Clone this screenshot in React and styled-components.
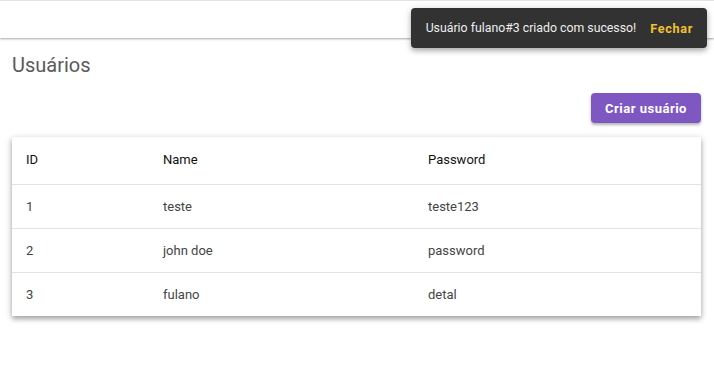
import React from "react";
import styled, { createGlobalStyle } from "styled-components";

const GlobalStyle = createGlobalStyle`
  body {
    margin: 0;
    background: #fff;
    font-family: Roboto, "Liberation Sans", sans-serif;
  }
`;

const users = [
  { id: 1, name: "teste", password: "teste123" },
  { id: 2, name: "john doe", password: "password" },
  { id: 3, name: "fulano", password: "detal" },
];

function App() {
  return (
    <>
      <GlobalStyle />
      <AppBar />
      <Snackbar>
        <span>Usuário fulano#3 criado com sucesso!</span>
        <SnackAction>Fechar</SnackAction>
      </Snackbar>
      <Main>
        <Title>Usuários</Title>
        <Actions>
          <PrimaryButton>Criar usuário</PrimaryButton>
        </Actions>
        <Card>
          <Table>
            <colgroup>
              <col style={{ width: 137 }} />
              <col style={{ width: 265 }} />
              <col />
            </colgroup>
            <thead>
              <tr>
                <Th>ID</Th>
                <Th>Name</Th>
                <Th>Password</Th>
              </tr>
            </thead>
            <tbody>
              {users.map((u, i) => (
                <tr key={u.id}>
                  <Td last={i === users.length - 1}>{u.id}</Td>
                  <Td last={i === users.length - 1}>{u.name}</Td>
                  <Td last={i === users.length - 1}>{u.password}</Td>
                </tr>
              ))}
            </tbody>
          </Table>
        </Card>
      </Main>
    </>
  );
}

export default App;

const AppBar = styled.header`
  height: 37px;
  background: #fff;
  border-top: 1px solid #e2e2e2;
  box-shadow: 0 1px 2px rgba(0, 0, 0, 0.35);
`;

const Snackbar = styled.div`
  position: absolute;
  top: 8px;
  right: 7px;
  height: 40px;
  box-sizing: border-box;
  padding: 0 14px 0 15px;
  display: flex;
  align-items: center;
  gap: 14px;
  background: #323232;
  color: #eee;
  border-radius: 4px;
  font-size: 12.3px;
  box-shadow: 0 3px 5px rgba(0, 0, 0, 0.25), 0 1px 10px rgba(0, 0, 0, 0.12);
`;

const SnackAction = styled.span`
  color: #f2c12e;
  font-weight: 700;
  font-size: 12.6px;
  letter-spacing: 0.7px;
`;

const Main = styled.main`
  padding: 0 13px 48px 12px;
`;

const Title = styled.h1`
  margin: 13px 0 0;
  font-size: 20px;
  line-height: 28px;
  font-weight: 400;
  color: #5a5a5a;
`;

const Actions = styled.div`
  display: flex;
  justify-content: flex-end;
  margin-top: 14px;
  margin-bottom: 14px;
`;

const PrimaryButton = styled.button`
  height: 30px;
  width: 110px;
  border: 0;
  border-radius: 4px;
  background: #7e57c2;
  color: #fff;
  font-family: Roboto, "Liberation Sans", sans-serif;
  font-size: 13px;
  font-weight: 700;
  letter-spacing: 0.5px;
  box-shadow: 0 2px 3px rgba(0, 0, 0, 0.3);
  cursor: pointer;
`;

const Card = styled.div`
  background: #fff;
  box-shadow: 0 3px 5px rgba(0, 0, 0, 0.3), 0 1px 8px rgba(0, 0, 0, 0.12);
`;

const Table = styled.table`
  width: 100%;
  border-collapse: collapse;
  table-layout: fixed;
  font-size: 13px;
`;

const Th = styled.th`
  height: 47px;
  padding: 0 14px 2px;
  box-sizing: border-box;
  text-align: left;
  font-weight: 400;
  color: #111;
  border-bottom: 1px solid #e3e3e3;
`;

const Td = styled.td`
  height: 43px;
  padding: 0 14px;
  color: #444;
  border-bottom: ${(p) => (p.last ? "none" : "1px solid #e3e3e3")};
`;
